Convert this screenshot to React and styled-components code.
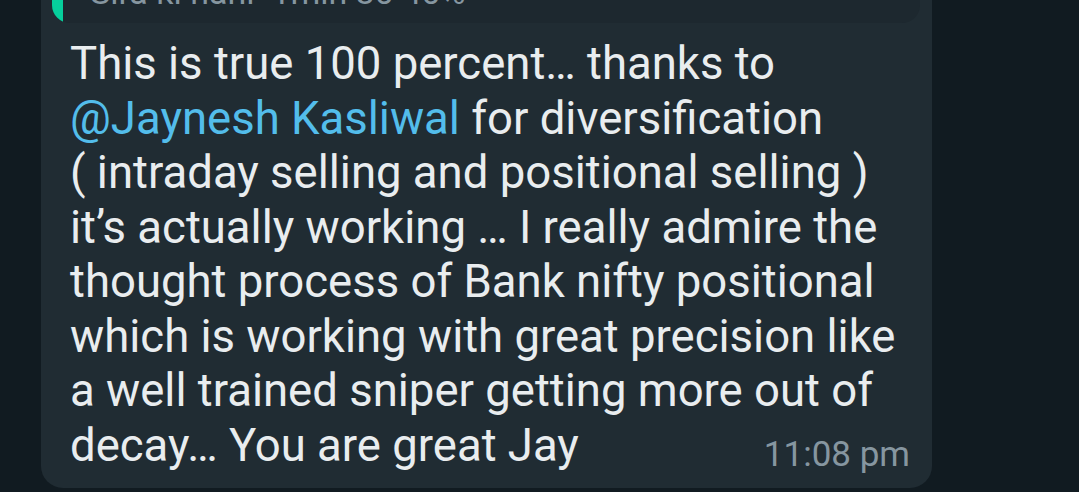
import React from 'react';
import styled, { createGlobalStyle } from 'styled-components';

const GlobalStyle = createGlobalStyle`
  html, body {
    margin: 0;
    padding: 0;
    background-color: #111b21;
    overflow: hidden;
  }
`

const Page = styled.div`
  height: 492px;
  overflow: hidden;
  padding-left: 41px;
  font-family: Roboto, 'Noto Sans', sans-serif;
  background-color: #111b21;
`
const Bubble = styled.div`
  width: 891px;
  margin-top: -45px;
  box-sizing: border-box;
  padding: 11px 12px 15px 11px;
  background-color: #202c33;
  border-radius: 0 0 22px 22px;
`
const Quote = styled.div`
  display: flex;
  background-color: #1d282f;
  border-radius: 18px;
  overflow: hidden;
`
const QuoteBar = styled.div`
  width: 11px;
  flex-shrink: 0;
  background-color: #06cf9c;
`
const QuoteText = styled.div`
  padding: 8px 20px 13px 27px;
  font-size: 34px;
  line-height: 36px;
  color: #8696a0;
  white-space: nowrap;
`
const Body = styled.div`
  display: grid;
  grid-template-columns: 1fr;
  margin-top: 14px;
  padding-left: 18px;
  padding-right: 10px;
`
const Message = styled.div`
  grid-area: 1 / 1;
  font-size: 45.5px;
  line-height: 54.5px;
  color: #e9edef;
  white-space: nowrap;
`
const Mention = styled.span`
  color: #53bdeb;
`
const Time = styled.div`
  grid-area: 1 / 1;
  justify-self: end;
  align-self: end;
  font-size: 35px;
  line-height: 36px;
  color: #8696a0;
  white-space: nowrap;
`

const lines = [
  '( intraday selling and positional selling )',
  'it\u2019s actually working \u2026 I really admire the',
  'thought process of Bank nifty positional',
  'which is working with great precision like',
  'a well trained sniper getting more out of',
  'decay\u2026 You are great Jay'
]

export default function App() {
  return (
    <Page>
      <GlobalStyle />
      <Bubble>
        <Quote>
          <QuoteBar />
          <QuoteText>Sira ki hani&nbsp; 1min 30 40%</QuoteText>
        </Quote>
        <Body>
          <Message>
            This is true 100 percent&hellip; thanks to<br />
            <Mention>@Jaynesh Kasliwal</Mention> for diversification
            {lines.map((line, i) => (
              <React.Fragment key={i}><br />{line}</React.Fragment>
            ))}
          </Message>
          <Time>11:08 pm</Time>
        </Body>
      </Bubble>
    </Page>
  );
}
